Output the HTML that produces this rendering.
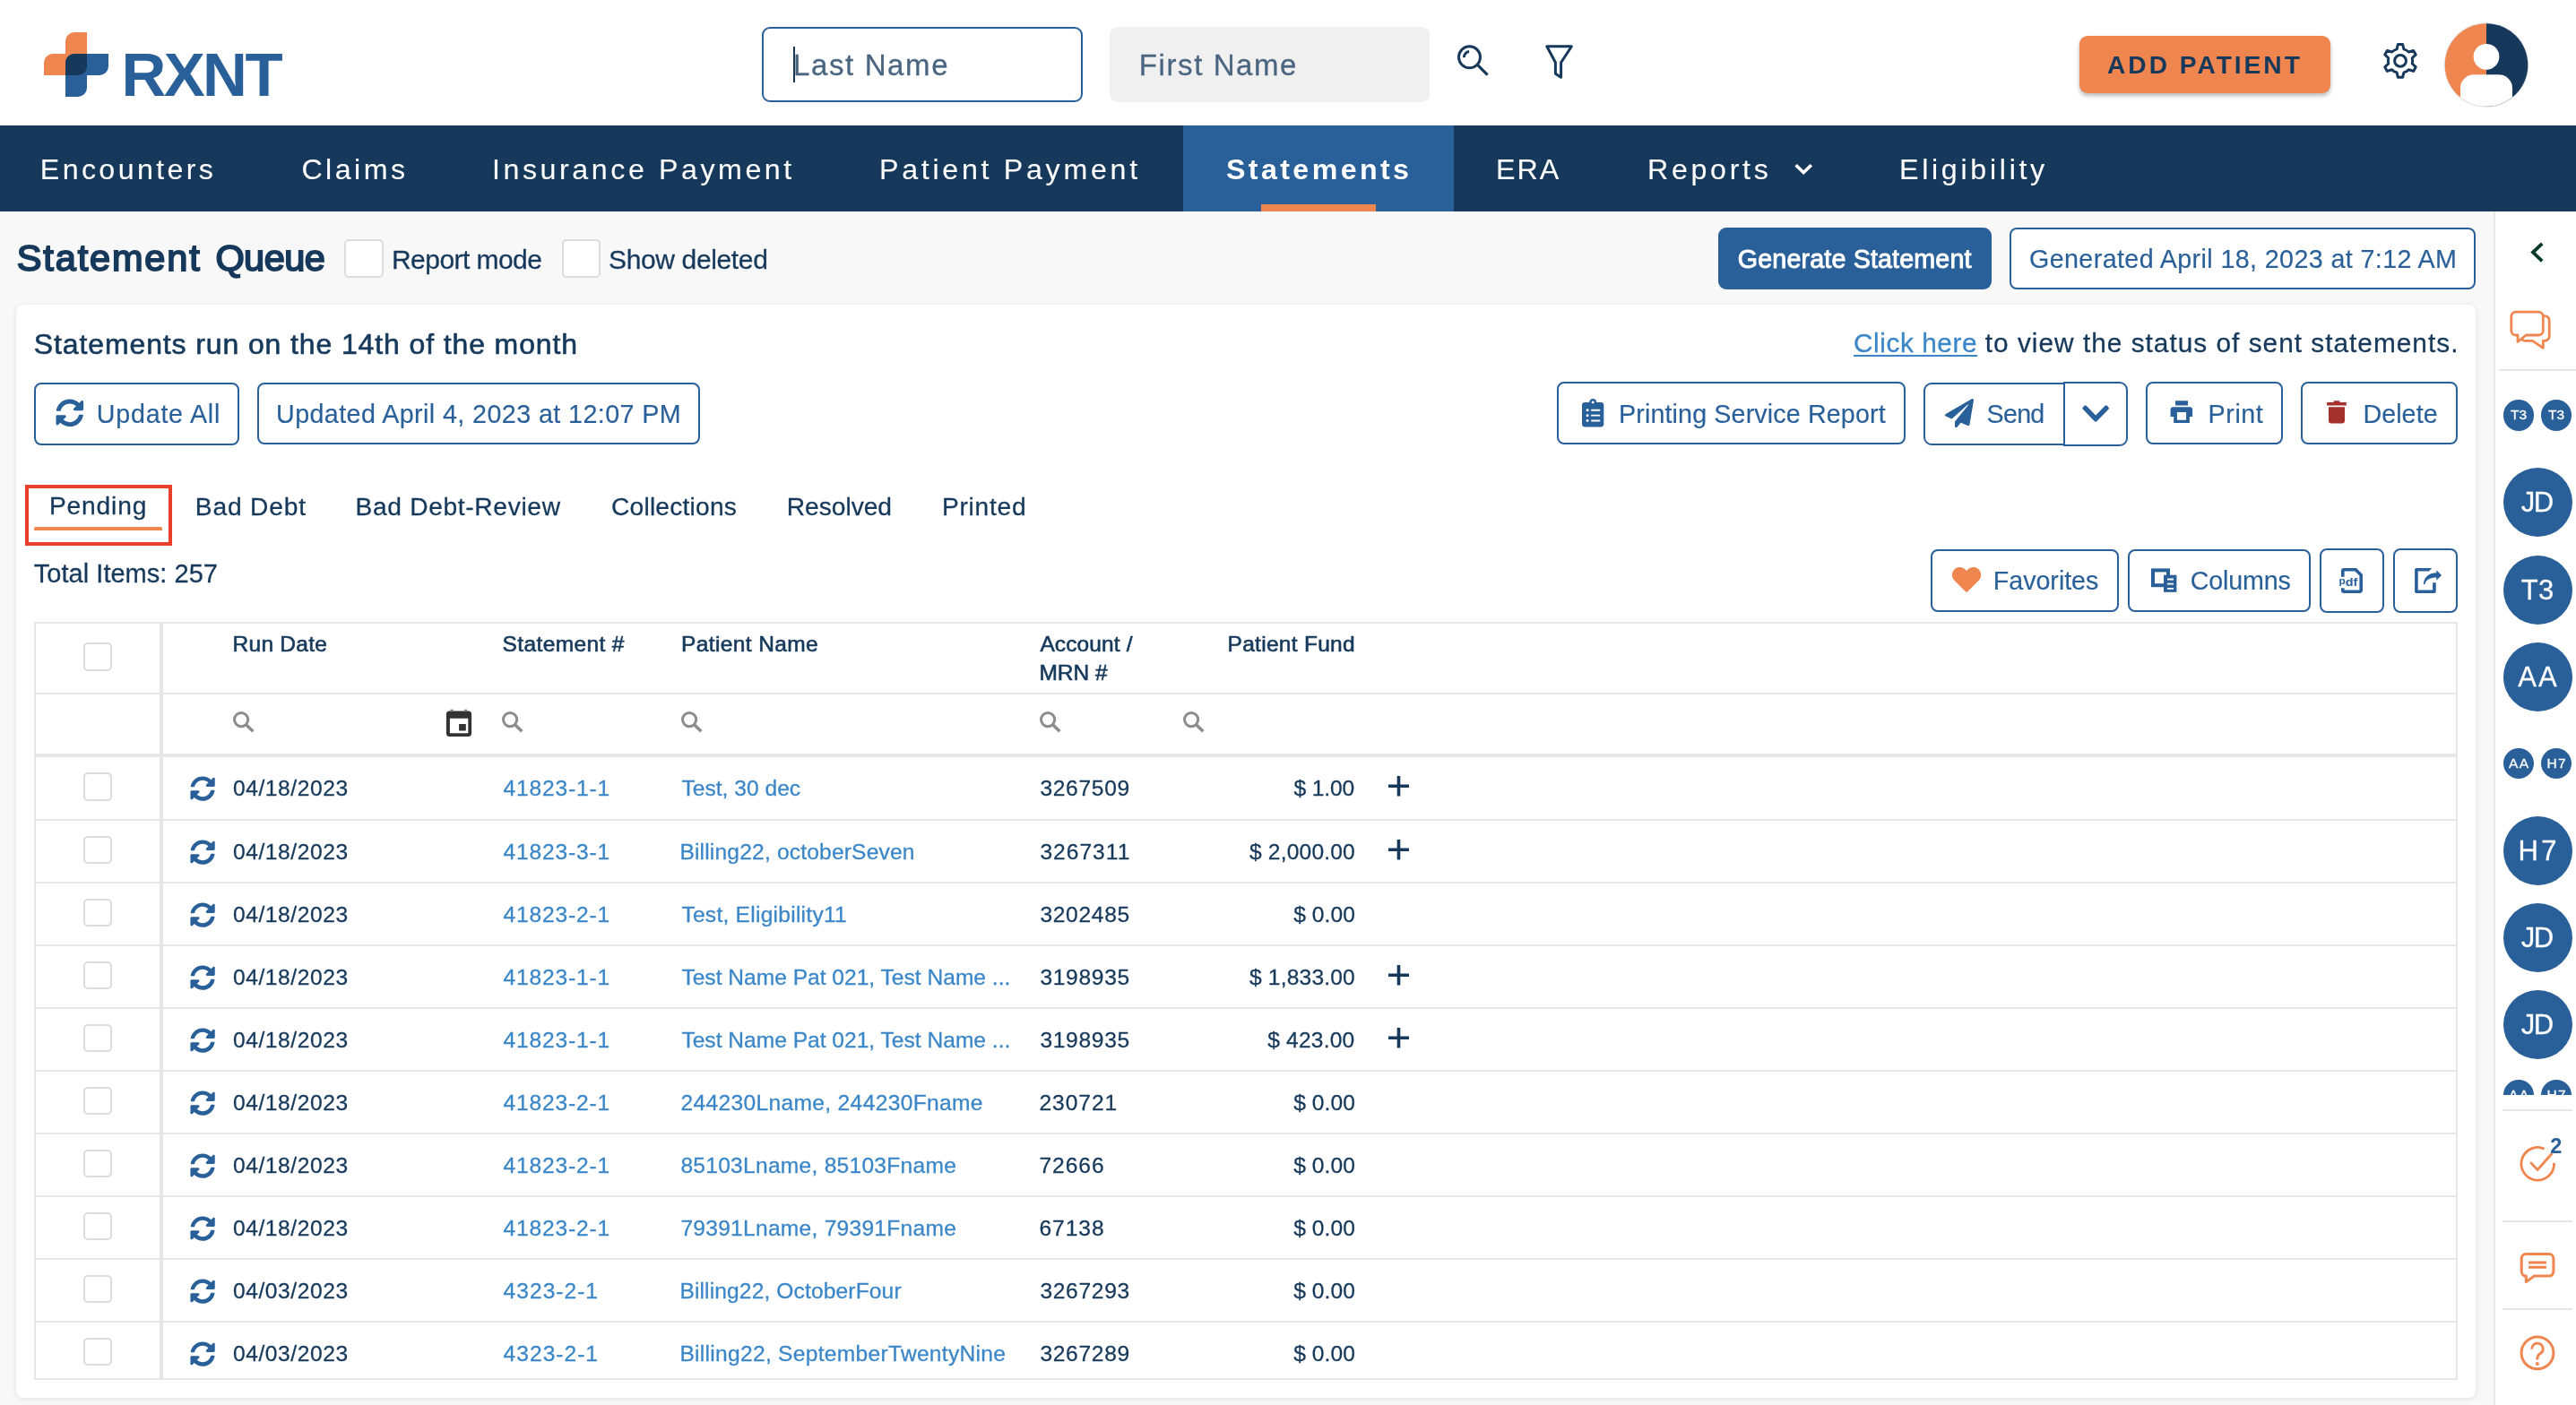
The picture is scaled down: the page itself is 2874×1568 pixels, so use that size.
<!DOCTYPE html><html lang="en"><head><meta charset="utf-8"><title>RXNT - Statement Queue</title><style>
*{box-sizing:border-box;margin:0;padding:0}
html,body{width:2874px;height:1568px;background:#f8f8f8}
body{position:relative;font-family:"Liberation Sans",Arial,sans-serif;color:#16395b;-webkit-text-stroke:.28px currentColor;will-change:transform}
.t{position:absolute;white-space:nowrap;line-height:1;display:block}
.ic{position:absolute;display:block;overflow:visible}
.abs{position:absolute}
header{position:absolute;left:0;top:0;width:2874px;height:140px;background:#fff}
nav{position:absolute;left:0;top:140px;width:2874px;height:96px;background:#16395b;color:#fff}
nav .act{position:absolute;left:1320px;top:0;width:302px;height:96px;background:#2a6099}
nav .act i{position:absolute;left:87px;bottom:0;width:128px;height:8px;background:#ef8650}
.inp{position:absolute;top:30px;height:83.6px;border-radius:9px}
.btn{position:absolute;border:2.4px solid #2a6099;border-radius:8px;background:#fff;color:#2a6099}
.cb{position:absolute;border:2px solid #dcdcdc;border-radius:5px;background:#fff}
.card{position:absolute;left:18px;top:340px;width:2744px;height:1220px;background:#fff;border-radius:8px;box-shadow:0 1px 6px rgba(0,0,0,.10)}
aside{position:absolute;left:2784px;top:236px;width:90px;height:1332px;background:#fff}
.gut{position:absolute;left:2782px;top:236px;width:2.5px;height:1332px;background:#e8e8e8}
.av{position:absolute;border-radius:50%;background:#2a6099;color:#fff;text-align:center}
.av.b{width:77px;height:77px;left:2792.5px;font-size:31px;line-height:77px}
.av.s{width:34.5px;height:34.5px;font-size:15.5px;line-height:34.5px}
.hr{position:absolute;left:2792px;width:78px;height:2px;background:#e6e6e6}
.grid{position:absolute;left:38px;top:694px;width:2704px;height:846px;border:2px solid #e7e7e7;overflow:hidden;background:#fff}
table{border-collapse:separate;border-spacing:0;table-layout:fixed;width:2700px;font-size:24px}
td,th{border-bottom:2px solid #e7e7e7;padding:0;font-weight:normal;text-align:left;position:relative;vertical-align:top}
tr.h th{height:79px}
tr.f td{height:70px;border-bottom-width:4px}
tr.d td{height:70px}
tr.d1 td{height:71px}
td.c0,th.c0{border-right:4px solid #e7e7e7}
a{color:#3a86c8;text-decoration:none}
.m{-webkit-text-stroke:.62px currentColor}
.sb{-webkit-text-stroke:.9px currentColor}
.nv{-webkit-text-stroke:.1px currentColor}
.bt{-webkit-text-stroke:.14px currentColor}
</style></head><body>
<header>
<svg class="ic" style="left:49px;top:36px" width="73" height="73" viewBox="0 0 73 73" ><path fill="#ef8650" d="M24 10A10 10 0 0 1 34 0H48V38A10 10 0 0 1 38 48H0V34A10 10 0 0 1 10 24H24Z"/><path fill="#2a6099" d="M24 34A10 10 0 0 1 34 24H72V38A10 10 0 0 1 62 48H48V62A10 10 0 0 1 38 72H24Z"/><path fill="#16395b" d="M24 34A10 10 0 0 1 34 24H48V38A10 10 0 0 1 38 48H24Z"/></svg>
<span id="rxnt" class="t" style="left:135.4px;top:49.1px;font-size:69px;letter-spacing:-2.56px;color:#2a6099;font-weight:bold;-webkit-text-stroke:0;">RXNT</span>
<div class="inp" style="left:850px;width:358px;border:2.5px solid #2a6099;background:#fff"></div>
<div class="abs" style="left:884.5px;top:52px;width:2px;height:40px;background:#16395b"></div>
<span id="lname" class="t" style="left:885.0px;top:55.6px;font-size:33px;letter-spacing:1.62px;color:#4a6580;">Last Name</span>
<div class="inp" style="left:1238px;width:357px;background:#f0f0f0"></div>
<span id="fname" class="t" style="left:1270.8px;top:55.6px;font-size:33px;letter-spacing:1.59px;color:#4a6580;">First Name</span>
<svg class="ic" style="left:1620px;top:44px" width="50" height="50" viewBox="1620 44 50 50" ><circle cx="1639.5" cy="63.8" r="12" fill="none" stroke="#16395b" stroke-width="3"/><path d="M1648.2 72.2L1659.6 83.6" stroke="#16395b" stroke-width="3.2" fill="none"/><path d="M1633.4 64.2A6.3 6.3 0 0 1 1639.1 57.6" stroke="#16395b" stroke-width="3" fill="none"/></svg>
<svg class="ic" style="left:1715px;top:44px" width="50" height="50" viewBox="1715 44 50 50" ><path d="M1725.8 51.8H1753.4L1741.6 69.8V86.2L1735.4 82.2V69.8Z" stroke="#16395b" stroke-width="3" fill="none" stroke-linejoin="round"/></svg>
<div class="abs" style="left:2320px;top:40px;width:280px;height:64px;border-radius:9px;background:#ef8650;box-shadow:0 3px 5px rgba(0,0,0,.28)"></div>
<span id="addp" class="t" style="left:2351.0px;top:58.1px;font-size:28.2px;letter-spacing:2.96px;color:#16395b;font-weight:bold;-webkit-text-stroke:0;">ADD PATIENT</span>
<svg class="ic" style="left:2654px;top:44px" width="48" height="48" viewBox="2654 44 48 48" ><path d="M2674.08 54.88L2675.38 49.49L2680.62 49.49L2681.92 54.88A13.60 13.60 0 0 1 2687.32 58.00L2692.64 56.42L2695.26 60.96L2691.24 64.78A13.60 13.60 0 0 1 2691.24 71.02L2695.26 74.84L2692.64 79.38L2687.32 77.80A13.60 13.60 0 0 1 2681.92 80.92L2680.62 86.31L2675.38 86.31L2674.08 80.92A13.60 13.60 0 0 1 2668.68 77.80L2663.36 79.38L2660.74 74.84L2664.76 71.02A13.60 13.60 0 0 1 2664.76 64.78L2660.74 60.96L2663.36 56.42L2668.68 58.00A13.60 13.60 0 0 1 2674.08 54.88Z" fill="none" stroke="#16395b" stroke-width="3" stroke-linejoin="round"/><circle cx="2678" cy="67.9" r="6.4" fill="none" stroke="#16395b" stroke-width="3"/></svg>
<svg class="ic" style="left:2726px;top:24px" width="97" height="97" viewBox="2726 24 97 97" ><defs><clipPath id="avc"><circle cx="2774" cy="72.5" r="46.3"/></clipPath></defs><circle cx="2774" cy="72.5" r="47.3" fill="#e4e7ea"/><g clip-path="url(#avc)"><rect x="2726" y="24" width="48" height="97" fill="#ef8650"/><rect x="2774" y="24" width="49" height="97" fill="#16395b"/><circle cx="2774" cy="63.3" r="14.4" fill="#fff"/><rect x="2745" y="83.3" width="58" height="50" rx="15" fill="#fff"/></g></svg>
</header>
<nav><div class="act"><i></i></div>
<span id="n1" class="t nv" style="left:44.8px;top:32.6px;font-size:32.2px;letter-spacing:3.37px;color:#fff;">Encounters</span>
<span id="n2" class="t nv" style="left:336.4px;top:32.6px;font-size:32.2px;letter-spacing:3.46px;color:#fff;">Claims</span>
<span id="n3" class="t nv" style="left:549.0px;top:32.6px;font-size:32.2px;letter-spacing:3.56px;color:#fff;">Insurance Payment</span>
<span id="n4" class="t nv" style="left:981.0px;top:32.6px;font-size:32.2px;letter-spacing:3.71px;color:#fff;">Patient Payment</span>
<span id="n5" class="t nv" style="left:1368.0px;top:32.6px;font-size:32.2px;letter-spacing:3.39px;color:#fff;font-weight:bold;-webkit-text-stroke:0;">Statements</span>
<span id="n6" class="t nv" style="left:1669.0px;top:32.6px;font-size:32.2px;letter-spacing:2.00px;color:#fff;">ERA</span>
<span id="n7" class="t nv" style="left:1838.0px;top:32.6px;font-size:32.2px;letter-spacing:3.67px;color:#fff;">Reports</span>
<span id="n8" class="t nv" style="left:2119.0px;top:32.6px;font-size:32.2px;letter-spacing:3.70px;color:#fff;">Eligibility</span>
<svg class="ic" style="left:2000px;top:40px" width="26" height="16" viewBox="2000 180 26 16" ><path d="M2003.6 184.2L2012.2 192.6L2020.8 184.2" stroke="#fff" stroke-width="3.6" fill="none"/></svg>
</nav>
<main>
<h1 style="font-weight:normal;font-size:41.5px"><span id="h1a" class="t" style="left:18.8px;top:266.6px;font-size:41.5px;letter-spacing:1.85px;-webkit-text-stroke:1.9px currentColor;">Statement</span><span id="h1b" class="t" style="left:240.4px;top:266.6px;font-size:41.5px;letter-spacing:-0.55px;-webkit-text-stroke:1.9px currentColor;">Queue</span></h1>
<div class="cb" style="left:384px;top:266.5px;width:43.5px;height:43.5px"></div>
<span id="rm" class="t" style="left:437.0px;top:274.6px;font-size:30px;letter-spacing:-0.55px;">Report mode</span>
<div class="cb" style="left:626.5px;top:266.5px;width:43.5px;height:43.5px"></div>
<span id="sd" class="t" style="left:679.0px;top:274.6px;font-size:30px;letter-spacing:-0.36px;">Show deleted</span>
<div class="abs" style="left:1917px;top:254px;width:305px;height:69px;border-radius:9px;background:#2a6099"></div>
<span id="gs" class="t sb" style="left:1938.8px;top:274.7px;font-size:28.7px;letter-spacing:0.14px;color:#fff;">Generate Statement</span>
<div class="btn" style="left:2242px;top:254px;width:520px;height:69px"></div>
<span id="gd" class="t bt" style="left:2264.0px;top:274.7px;font-size:28.7px;letter-spacing:0.38px;color:#2a6099;">Generated April 18, 2023 at 7:12 AM</span>
<section class="card"></section>
<span id="srun" class="t m" style="left:37.8px;top:367.9px;font-size:32px;letter-spacing:0.88px;">Statements run on the 14th of the month</span>
<a id="ch" class="t" style="left:2068.0px;top:367.8px;font-size:29.8px;letter-spacing:0.56px;color:#3a86c8;text-decoration:underline;text-decoration-thickness:2px;text-underline-offset:2.5px;">Click here</a>
<span id="tv" class="t" style="left:2214.8px;top:367.8px;font-size:29.8px;letter-spacing:1.01px;">to view the status of sent statements.</span>
<div class="btn" style="left:38px;top:427px;width:229px;height:70px"></div>
<svg class="ic" style="left:62px;top:445px" width="31.6" height="31.6" viewBox="0 0 512 512" ><path fill="#2a6099" d="M370.72 133.28C339.458 104.008 298.888 87.962 255.848 88c-77.458.068-144.328 53.178-162.791 126.85-1.344 5.363-6.122 9.15-11.651 9.15H24.103c-7.498 0-13.194-6.807-11.807-14.176C33.933 94.924 134.813 8 256 8c66.448 0 126.791 26.136 171.315 68.685L463.03 40.97C478.149 25.851 504 36.559 504 57.941V192c0 13.255-10.745 24-24 24H345.941c-21.382 0-32.09-25.851-16.971-40.971l41.75-41.749zM32 296h134.059c21.382 0 32.09 25.851 16.971 40.971l-41.75 41.75c31.262 29.273 71.835 45.319 114.876 45.28 77.418-.07 144.315-53.144 162.787-126.849 1.344-5.363 6.122-9.15 11.651-9.15h57.304c7.498 0 13.194 6.807 11.807 14.176C478.067 417.076 377.187 504 256 504c-66.448 0-126.791-26.136-171.315-68.685L48.97 471.03C33.851 486.149 8 475.441 8 454.059V320c0-13.255 10.745-24 24-24z"/></svg>
<span id="ua" class="t bt" style="left:107.8px;top:448.0px;font-size:28.7px;letter-spacing:0.75px;color:#2a6099;">Update All</span>
<div class="btn" style="left:287px;top:427px;width:494px;height:69px"></div>
<span id="ud" class="t bt" style="left:308.0px;top:447.5px;font-size:28.7px;letter-spacing:0.41px;color:#2a6099;">Updated April 4, 2023 at 12:07 PM</span>
<div class="btn" style="left:1737px;top:426px;width:389px;height:70px"></div>
<svg class="ic" style="left:1764.7px;top:444.5px" width="24.3" height="31.4" viewBox="0 0 384 512" preserveAspectRatio="none"><path fill="#2a6099" d="M336 64h-80c0-35.300-28.700-64-64-64s-64 28.700-64 64H48C21.500 64 0 85.500 0 112v352c0 26.500 21.500 48 48 48h288c26.500 0 48-21.500 48-48V112c0-26.500-21.500-48-48-48zM96 424c-13.300 0-24-10.700-24-24s10.700-24 24-24 24 10.700 24 24-10.700 24-24 24zm0-96c-13.300 0-24-10.700-24-24s10.700-24 24-24 24 10.700 24 24-10.700 24-24 24zm0-96c-13.300 0-24-10.700-24-24s10.700-24 24-24 24 10.700 24 24-10.700 24-24 24zm96-192c13.300 0 24 10.700 24 24s-10.700 24-24 24-24-10.700-24-24 10.700-24 24-24zm128 368c0 4.400-3.600 8-8 8H168c-4.400 0-8-3.600-8-8v-16c0-4.400 3.600-8 8-8h144c4.400 0 8 3.600 8 8v16zm0-96c0 4.400-3.600 8-8 8H168c-4.400 0-8-3.600-8-8v-16c0-4.400 3.600-8 8-8h144c4.400 0 8 3.600 8 8v16zm0-96c0 4.400-3.600 8-8 8H168c-4.400 0-8-3.600-8-8v-16c0-4.400 3.600-8 8-8h144c4.400 0 8 3.600 8 8v16z"/></svg>
<span id="psr" class="t bt" style="left:1806.0px;top:447.5px;font-size:28.7px;letter-spacing:0.12px;color:#2a6099;">Printing Service Report</span>
<div class="btn" style="left:2146px;top:427px;width:159px;height:70px;border-radius:9px 0 0 9px"></div>
<svg class="ic" style="left:2170px;top:445px" width="32" height="32" viewBox="0 0 512 512" ><path fill="#2a6099" d="M476 3.2L12.5 270.6c-18.1 10.4-15.8 35.6 2.2 43.2L121 358.4l287.3-253.2c5.5-4.9 13.3 2.6 8.600 8.300L176 407v80.5c0 23.600 28.500 32.900 42.500 15.800L282 426l124.600 52.200c14.200 6 30.400-2.900 33-18.200l72-432C515 7.800 493.300-6.800 476 3.200z"/></svg>
<span id="send" class="t bt" style="left:2216.6px;top:447.7px;font-size:28.7px;letter-spacing:-0.77px;color:#2a6099;">Send</span>
<div class="btn" style="left:2302px;top:426px;width:72px;height:72px;border-radius:0 9px 9px 0"></div>
<svg class="ic" style="left:2323px;top:451.7px" width="30.3" height="19.2" viewBox="0 118 448 276" preserveAspectRatio="none"><path fill="#2a6099" d="M207.029 381.476L12.686 187.132c-9.373-9.373-9.373-24.569 0-33.941l22.667-22.667c9.357-9.357 24.522-9.375 33.901-.04L224 284.505l154.745-154.021c9.379-9.335 24.544-9.317 33.901.04l22.667 22.667c9.373 9.373 9.373 24.569 0 33.941L240.971 381.476c-9.373 9.372-24.569 9.372-33.942 0z"/></svg>
<div class="btn" style="left:2394px;top:426px;width:153px;height:70px"></div>
<svg class="ic" style="left:2419px;top:445px" width="30" height="30" viewBox="2419 445 30 30" ><path fill="#2a6099" fill-rule="evenodd" d="M2427 447.2H2441V452.4H2427ZM2424.6 454.2H2443.1A3 3 0 0 1 2446.1 457.2V464.9H2442.9V471.9H2425.2V464.9H2421.6V457.2A3 3 0 0 1 2424.6 454.2ZM2428.9 460H2439.1V468.7H2428.9Z"/></svg>
<span id="print" class="t bt" style="left:2463.6px;top:447.5px;font-size:28.7px;letter-spacing:0.55px;color:#2a6099;">Print</span>
<div class="btn" style="left:2567px;top:426px;width:175px;height:70px"></div>
<svg class="ic" style="left:2594px;top:445px" width="26" height="30" viewBox="2594 445 26 30" ><path fill="#a5312d" d="M2603.6 447.2H2610.4V449.1H2617.8V452.4H2596.1V449.1H2603.6ZM2598 454.2H2616V469.4A3 3 0 0 1 2613 472.4H2601A3 3 0 0 1 2598 469.4Z"/></svg>
<span id="del" class="t bt" style="left:2636.4px;top:447.5px;font-size:28.7px;letter-spacing:0.06px;color:#2a6099;">Delete</span>
<div class="abs" style="left:28.3px;top:541.2px;width:163.4px;height:67.8px;border:4.5px solid #e8402a"></div>
<div class="abs" style="left:38.4px;top:588px;width:142.2px;height:4px;background:#ef8650;border-radius:2px 2px 0 0"></div>
<span id="tb1" class="t" style="left:55.0px;top:550.4px;font-size:28.2px;letter-spacing:0.81px;">Pending</span>
<span id="tb2" class="t" style="left:217.8px;top:551.1px;font-size:28.2px;letter-spacing:0.81px;">Bad Debt</span>
<span id="tb3" class="t" style="left:396.6px;top:551.1px;font-size:28.2px;letter-spacing:0.65px;">Bad Debt-Review</span>
<span id="tb4" class="t" style="left:682.0px;top:551.1px;font-size:28.2px;letter-spacing:0.20px;">Collections</span>
<span id="tb5" class="t" style="left:877.8px;top:551.1px;font-size:28.2px;letter-spacing:-0.04px;">Resolved</span>
<span id="tb6" class="t" style="left:1051.0px;top:551.1px;font-size:28.2px;letter-spacing:0.71px;">Printed</span>
<span id="tot" class="t" style="left:37.8px;top:626.4px;font-size:29px;letter-spacing:0.03px;">Total Items: 257</span>
<div class="btn" style="left:2154px;top:613px;width:210px;height:70px"></div>
<svg class="ic" style="left:2178px;top:632.9px" width="32.2" height="27.8" viewBox="0 30 512 452" preserveAspectRatio="none"><path fill="#ef8650" d="M462.3 62.6C407.500 15.900 326 24.300 275.700 76.200L256 96.500l-19.700-20.300C186.100 24.300 104.500 15.900 49.700 62.600c-62.800 53.600-66.100 149.800-9.900 207.900l193.500 199.800c12.500 12.900 32.800 12.900 45.300 0l193.500-199.800c56.300-58.100 53-154.300-9.800-207.900z"/></svg>
<span id="fav" class="t bt" style="left:2223.8px;top:633.7px;font-size:28.7px;letter-spacing:-0.05px;color:#2a6099;">Favorites</span>
<div class="btn" style="left:2374px;top:613px;width:204px;height:70px"></div>
<svg class="ic" style="left:2398px;top:632px" width="34" height="32" viewBox="2398 632 34 32" ><rect x="2402" y="636.4" width="17" height="16.8" fill="none" stroke="#2a6099" stroke-width="4"/><rect x="2414" y="641.7" width="14.4" height="19.1" fill="#2a6099"/><path d="M2418 646.5H2425M2418 651.7H2425M2418 656.8H2425" stroke="#fff" stroke-width="1.8"/></svg>
<span id="cols" class="t bt" style="left:2443.8px;top:633.7px;font-size:28.7px;letter-spacing:-0.20px;color:#2a6099;">Columns</span>
<div class="btn" style="left:2588px;top:612px;width:72px;height:72px"></div>
<svg class="ic" style="left:2606px;top:630px" width="36" height="36" viewBox="2606 630 36 36" ><path d="M2613.800 643.700V637.300A1.500 1.500 0 0 1 2615.300 635.800H2628.200L2634.200 641.800V658.700A1.500 1.500 0 0 1 2632.700 660.200H2615.300A1.500 1.500 0 0 1 2613.800 658.700V656.200" fill="none" stroke="#2a6099" stroke-width="3.600"/><text x="2609.500" y="653.800" style="-webkit-text-stroke:0" font-family="Liberation Sans,Arial,sans-serif" font-weight="bold" font-size="13.400" fill="#2a6099" textLength="20.800" lengthAdjust="spacingAndGlyphs"><tspan font-size="11" dy="-2.300">p</tspan><tspan dy="2.300">df</tspan></text></svg>
<div class="btn" style="left:2670px;top:612px;width:72px;height:72px"></div>
<svg class="ic" style="left:2690px;top:630px" width="40" height="36" viewBox="2690 630 40 36" ><path d="M2710 635.800H2695.900V660.200H2715.900V650.300" fill="none" stroke="#2a6099" stroke-width="3.600" stroke-linejoin="round"/><path fill="#2a6099" d="M2709.500 634H2713.300L2709.800 637.600H2709.500Z"/><path fill="#2a6099" d="M2703.900 652.200C2704.300 643.400 2710.500 639.300 2718.300 639.300V636.200L2724 641.900L2718.300 647.700V644.400C2711.500 644.400 2706.800 646.200 2705.300 652.200Z"/></svg>
<div class="grid"><table><colgroup><col style="width:142px"><col style="width:360px"><col style="width:200px"><col style="width:400px"><col style="width:160px"><col style="width:231px"><col style="width:1207px"></colgroup>
<thead><tr class="h">
<th class="c0"><div class="cb" style="left:53.2px;top:21.3px;width:31.6px;height:31.6px"></div></th>
<th><span id="th1" class="t m" style="left:77.6px;top:10.8px;font-size:24.5px;letter-spacing:0.25px;">Run Date</span></th>
<th><span id="th2" class="t m" style="left:18.6px;top:10.8px;font-size:24.5px;letter-spacing:0.38px;">Statement #</span></th>
<th><span id="th3" class="t m" style="left:18.0px;top:10.8px;font-size:24.5px;letter-spacing:0.39px;">Patient Name</span></th>
<th><span id="th4a" class="t m" style="left:18.4px;top:10.8px;font-size:24.5px;letter-spacing:0.12px;">Account /</span><span id="th4b" class="t m" style="left:17.4px;top:42.9px;font-size:24.5px;letter-spacing:0.03px;">MRN #</span></th>
<th><span id="th5" class="t m" style="left:67.6px;top:10.8px;font-size:24.5px;letter-spacing:0.28px;">Patient Fund</span></th>
<th></th></tr>
<tr class="f"><td class="c0"></td>
<td><svg class="ic" style="left:77.60000000000002px;top:19.200000000000045px" width="26" height="26" viewBox="0 0 26 26" ><circle cx="9.1" cy="9.1" r="7.6" fill="none" stroke="#8c8c8c" stroke-width="3"/><path d="M14.7 14.9L22.4 22.3" stroke="#8c8c8c" stroke-width="3.4" fill="none"/></svg><svg class="ic" style="left:315px;top:15px" width="31" height="33" viewBox="497 790 31 33" ><path fill="#333" fill-rule="evenodd" d="M501.500 793.500H522.500A3.600 3.600 0 0 1 526.100 797.100V818.300A3.600 3.600 0 0 1 522.500 821.900H501.500A3.600 3.600 0 0 1 497.900 818.300V797.100A3.600 3.600 0 0 1 501.500 793.500ZM501.900 801.700H522.300V818.200H501.900ZM512.100 807.900H519.800V815.400H512.100Z"/><path d="M502.500 792.300H505.700M517.900 792.300H521.100" stroke="#555" stroke-width="1"/></svg></td>
<td><svg class="ic" style="left:17.600000000000023px;top:19.200000000000045px" width="26" height="26" viewBox="0 0 26 26" ><circle cx="9.1" cy="9.1" r="7.6" fill="none" stroke="#8c8c8c" stroke-width="3"/><path d="M14.7 14.9L22.4 22.3" stroke="#8c8c8c" stroke-width="3.4" fill="none"/></svg></td>
<td><svg class="ic" style="left:17.600000000000023px;top:19.200000000000045px" width="26" height="26" viewBox="0 0 26 26" ><circle cx="9.1" cy="9.1" r="7.6" fill="none" stroke="#8c8c8c" stroke-width="3"/><path d="M14.7 14.9L22.4 22.3" stroke="#8c8c8c" stroke-width="3.4" fill="none"/></svg></td>
<td><svg class="ic" style="left:17.59999999999991px;top:19.200000000000045px" width="26" height="26" viewBox="0 0 26 26" ><circle cx="9.1" cy="9.1" r="7.6" fill="none" stroke="#8c8c8c" stroke-width="3"/><path d="M14.7 14.9L22.4 22.3" stroke="#8c8c8c" stroke-width="3.4" fill="none"/></svg></td>
<td><svg class="ic" style="left:17.59999999999991px;top:19.200000000000045px" width="26" height="26" viewBox="0 0 26 26" ><circle cx="9.1" cy="9.1" r="7.6" fill="none" stroke="#8c8c8c" stroke-width="3"/><path d="M14.7 14.9L22.4 22.3" stroke="#8c8c8c" stroke-width="3.4" fill="none"/></svg></td>
<td></td></tr></thead><tbody>
<tr class="d d1">
<td class="c0"><div class="cb" style="left:53.2px;top:17.200000000000045px;width:31.6px;height:31.6px"></div></td>
<td><svg class="ic" style="left:29.80000000000001px;top:20.5px" width="28.2" height="28.2" viewBox="0 0 512 512" ><path fill="#2a6099" d="M370.72 133.28C339.458 104.008 298.888 87.962 255.848 88c-77.458.068-144.328 53.178-162.791 126.85-1.344 5.363-6.122 9.15-11.651 9.15H24.103c-7.498 0-13.194-6.807-11.807-14.176C33.933 94.924 134.813 8 256 8c66.448 0 126.791 26.136 171.315 68.685L463.03 40.97C478.149 25.851 504 36.559 504 57.941V192c0 13.255-10.745 24-24 24H345.941c-21.382 0-32.09-25.851-16.971-40.971l41.75-41.749zM32 296h134.059c21.382 0 32.09 25.851 16.971 40.971l-41.75 41.75c31.262 29.273 71.835 45.319 114.876 45.28 77.418-.07 144.315-53.144 162.787-126.849 1.344-5.363 6.122-9.15 11.651-9.15h57.304c7.498 0 13.194 6.807 11.807 14.176C478.067 417.076 377.187 504 256 504c-66.448 0-126.791-26.136-171.315-68.685L48.97 471.03C33.851 486.149 8 475.441 8 454.059V320c0-13.255 10.745-24 24-24z"/></svg><span id="r0a" class="t" style="left:78.0px;top:23.2px;font-size:24.6px;letter-spacing:0.56px;">04/18/2023</span></td>
<td><a id="r0b" class="t" style="left:19.6px;top:23.2px;font-size:24.6px;letter-spacing:0.81px;color:#3a86c8;">41823-1-1</a></td>
<td><a id="r0c" class="t" style="left:18.4px;top:23.2px;font-size:24.6px;letter-spacing:0.01px;color:#3a86c8;">Test, 30 dec</a></td>
<td><span id="r0d" class="t" style="left:18.4px;top:23.2px;font-size:24.6px;letter-spacing:0.67px;">3267509</span></td>
<td><span id="r0e" class="t" style="left:141.6px;top:23.2px;font-size:24.6px;letter-spacing:-0.16px;">$ 1.00</span></td>
<td><svg class="ic" style="left:16px;top:21.299999999999955px" width="23" height="23" viewBox="0 0 23 23" ><path d="M11.500 0V22.400M0 11.200H23" stroke="#16395b" stroke-width="3.600" fill="none"/></svg></td></tr>
<tr class="d">
<td class="c0"><div class="cb" style="left:53.2px;top:16.700000000000045px;width:31.6px;height:31.6px"></div></td>
<td><svg class="ic" style="left:29.80000000000001px;top:20.5px" width="28.2" height="28.2" viewBox="0 0 512 512" ><path fill="#2a6099" d="M370.72 133.28C339.458 104.008 298.888 87.962 255.848 88c-77.458.068-144.328 53.178-162.791 126.85-1.344 5.363-6.122 9.15-11.651 9.15H24.103c-7.498 0-13.194-6.807-11.807-14.176C33.933 94.924 134.813 8 256 8c66.448 0 126.791 26.136 171.315 68.685L463.03 40.97C478.149 25.851 504 36.559 504 57.941V192c0 13.255-10.745 24-24 24H345.941c-21.382 0-32.09-25.851-16.971-40.971l41.75-41.749zM32 296h134.059c21.382 0 32.09 25.851 16.971 40.971l-41.75 41.75c31.262 29.273 71.835 45.319 114.876 45.28 77.418-.07 144.315-53.144 162.787-126.849 1.344-5.363 6.122-9.15 11.651-9.15h57.304c7.498 0 13.194 6.807 11.807 14.176C478.067 417.076 377.187 504 256 504c-66.448 0-126.791-26.136-171.315-68.685L48.97 471.03C33.851 486.149 8 475.441 8 454.059V320c0-13.255 10.745-24 24-24z"/></svg><span id="r1a" class="t" style="left:78.0px;top:23.2px;font-size:24.6px;letter-spacing:0.56px;">04/18/2023</span></td>
<td><a id="r1b" class="t" style="left:19.6px;top:23.2px;font-size:24.6px;letter-spacing:0.81px;color:#3a86c8;">41823-3-1</a></td>
<td><a id="r1c" class="t" style="left:16.4px;top:23.2px;font-size:24.6px;letter-spacing:0.17px;color:#3a86c8;">Billing22, octoberSeven</a></td>
<td><span id="r1d" class="t" style="left:18.4px;top:23.2px;font-size:24.6px;letter-spacing:1.00px;">3267311</span></td>
<td><span id="r1e" class="t" style="left:92.0px;top:23.2px;font-size:24.6px;letter-spacing:0.17px;">$ 2,000.00</span></td>
<td><svg class="ic" style="left:16px;top:21.299999999999955px" width="23" height="23" viewBox="0 0 23 23" ><path d="M11.500 0V22.400M0 11.200H23" stroke="#16395b" stroke-width="3.600" fill="none"/></svg></td></tr>
<tr class="d">
<td class="c0"><div class="cb" style="left:53.2px;top:16.700000000000045px;width:31.6px;height:31.6px"></div></td>
<td><svg class="ic" style="left:29.80000000000001px;top:20.5px" width="28.2" height="28.2" viewBox="0 0 512 512" ><path fill="#2a6099" d="M370.72 133.28C339.458 104.008 298.888 87.962 255.848 88c-77.458.068-144.328 53.178-162.791 126.85-1.344 5.363-6.122 9.15-11.651 9.15H24.103c-7.498 0-13.194-6.807-11.807-14.176C33.933 94.924 134.813 8 256 8c66.448 0 126.791 26.136 171.315 68.685L463.03 40.97C478.149 25.851 504 36.559 504 57.941V192c0 13.255-10.745 24-24 24H345.941c-21.382 0-32.09-25.851-16.971-40.971l41.75-41.749zM32 296h134.059c21.382 0 32.09 25.851 16.971 40.971l-41.75 41.75c31.262 29.273 71.835 45.319 114.876 45.28 77.418-.07 144.315-53.144 162.787-126.849 1.344-5.363 6.122-9.15 11.651-9.15h57.304c7.498 0 13.194 6.807 11.807 14.176C478.067 417.076 377.187 504 256 504c-66.448 0-126.791-26.136-171.315-68.685L48.97 471.03C33.851 486.149 8 475.441 8 454.059V320c0-13.255 10.745-24 24-24z"/></svg><span id="r2a" class="t" style="left:78.0px;top:23.2px;font-size:24.6px;letter-spacing:0.56px;">04/18/2023</span></td>
<td><a id="r2b" class="t" style="left:19.6px;top:23.2px;font-size:24.6px;letter-spacing:0.81px;color:#3a86c8;">41823-2-1</a></td>
<td><a id="r2c" class="t" style="left:18.4px;top:23.2px;font-size:24.6px;letter-spacing:0.24px;color:#3a86c8;">Test, Eligibility11</a></td>
<td><span id="r2d" class="t" style="left:18.4px;top:23.2px;font-size:24.6px;letter-spacing:0.67px;">3202485</span></td>
<td><span id="r2e" class="t" style="left:141.2px;top:23.2px;font-size:24.6px;letter-spacing:0.08px;">$ 0.00</span></td>
<td></td></tr>
<tr class="d">
<td class="c0"><div class="cb" style="left:53.2px;top:16.700000000000045px;width:31.6px;height:31.6px"></div></td>
<td><svg class="ic" style="left:29.80000000000001px;top:20.5px" width="28.2" height="28.2" viewBox="0 0 512 512" ><path fill="#2a6099" d="M370.72 133.28C339.458 104.008 298.888 87.962 255.848 88c-77.458.068-144.328 53.178-162.791 126.85-1.344 5.363-6.122 9.15-11.651 9.15H24.103c-7.498 0-13.194-6.807-11.807-14.176C33.933 94.924 134.813 8 256 8c66.448 0 126.791 26.136 171.315 68.685L463.03 40.97C478.149 25.851 504 36.559 504 57.941V192c0 13.255-10.745 24-24 24H345.941c-21.382 0-32.09-25.851-16.971-40.971l41.75-41.749zM32 296h134.059c21.382 0 32.09 25.851 16.971 40.971l-41.75 41.75c31.262 29.273 71.835 45.319 114.876 45.28 77.418-.07 144.315-53.144 162.787-126.849 1.344-5.363 6.122-9.15 11.651-9.15h57.304c7.498 0 13.194 6.807 11.807 14.176C478.067 417.076 377.187 504 256 504c-66.448 0-126.791-26.136-171.315-68.685L48.97 471.03C33.851 486.149 8 475.441 8 454.059V320c0-13.255 10.745-24 24-24z"/></svg><span id="r3a" class="t" style="left:78.0px;top:23.2px;font-size:24.6px;letter-spacing:0.56px;">04/18/2023</span></td>
<td><a id="r3b" class="t" style="left:19.6px;top:23.2px;font-size:24.6px;letter-spacing:0.81px;color:#3a86c8;">41823-1-1</a></td>
<td><a id="r3c" class="t" style="left:18.4px;top:23.2px;font-size:24.6px;letter-spacing:-0.01px;color:#3a86c8;">Test Name Pat 021, Test Name ...</a></td>
<td><span id="r3d" class="t" style="left:18.4px;top:23.2px;font-size:24.6px;letter-spacing:0.67px;">3198935</span></td>
<td><span id="r3e" class="t" style="left:92.0px;top:23.2px;font-size:24.6px;letter-spacing:0.17px;">$ 1,833.00</span></td>
<td><svg class="ic" style="left:16px;top:21.299999999999955px" width="23" height="23" viewBox="0 0 23 23" ><path d="M11.500 0V22.400M0 11.200H23" stroke="#16395b" stroke-width="3.600" fill="none"/></svg></td></tr>
<tr class="d">
<td class="c0"><div class="cb" style="left:53.2px;top:16.700000000000045px;width:31.6px;height:31.6px"></div></td>
<td><svg class="ic" style="left:29.80000000000001px;top:20.5px" width="28.2" height="28.2" viewBox="0 0 512 512" ><path fill="#2a6099" d="M370.72 133.28C339.458 104.008 298.888 87.962 255.848 88c-77.458.068-144.328 53.178-162.791 126.85-1.344 5.363-6.122 9.15-11.651 9.15H24.103c-7.498 0-13.194-6.807-11.807-14.176C33.933 94.924 134.813 8 256 8c66.448 0 126.791 26.136 171.315 68.685L463.03 40.97C478.149 25.851 504 36.559 504 57.941V192c0 13.255-10.745 24-24 24H345.941c-21.382 0-32.09-25.851-16.971-40.971l41.75-41.749zM32 296h134.059c21.382 0 32.09 25.851 16.971 40.971l-41.75 41.75c31.262 29.273 71.835 45.319 114.876 45.28 77.418-.07 144.315-53.144 162.787-126.849 1.344-5.363 6.122-9.15 11.651-9.15h57.304c7.498 0 13.194 6.807 11.807 14.176C478.067 417.076 377.187 504 256 504c-66.448 0-126.791-26.136-171.315-68.685L48.97 471.03C33.851 486.149 8 475.441 8 454.059V320c0-13.255 10.745-24 24-24z"/></svg><span id="r4a" class="t" style="left:78.0px;top:23.2px;font-size:24.6px;letter-spacing:0.56px;">04/18/2023</span></td>
<td><a id="r4b" class="t" style="left:19.6px;top:23.2px;font-size:24.6px;letter-spacing:0.81px;color:#3a86c8;">41823-1-1</a></td>
<td><a id="r4c" class="t" style="left:18.4px;top:23.2px;font-size:24.6px;letter-spacing:-0.01px;color:#3a86c8;">Test Name Pat 021, Test Name ...</a></td>
<td><span id="r4d" class="t" style="left:18.4px;top:23.2px;font-size:24.6px;letter-spacing:0.67px;">3198935</span></td>
<td><span id="r4e" class="t" style="left:112.2px;top:23.2px;font-size:24.6px;letter-spacing:0.19px;">$ 423.00</span></td>
<td><svg class="ic" style="left:16px;top:21.299999999999955px" width="23" height="23" viewBox="0 0 23 23" ><path d="M11.500 0V22.400M0 11.200H23" stroke="#16395b" stroke-width="3.600" fill="none"/></svg></td></tr>
<tr class="d">
<td class="c0"><div class="cb" style="left:53.2px;top:16.700000000000045px;width:31.6px;height:31.6px"></div></td>
<td><svg class="ic" style="left:29.80000000000001px;top:20.5px" width="28.2" height="28.2" viewBox="0 0 512 512" ><path fill="#2a6099" d="M370.72 133.28C339.458 104.008 298.888 87.962 255.848 88c-77.458.068-144.328 53.178-162.791 126.85-1.344 5.363-6.122 9.15-11.651 9.15H24.103c-7.498 0-13.194-6.807-11.807-14.176C33.933 94.924 134.813 8 256 8c66.448 0 126.791 26.136 171.315 68.685L463.03 40.97C478.149 25.851 504 36.559 504 57.941V192c0 13.255-10.745 24-24 24H345.941c-21.382 0-32.09-25.851-16.971-40.971l41.75-41.749zM32 296h134.059c21.382 0 32.09 25.851 16.971 40.971l-41.75 41.75c31.262 29.273 71.835 45.319 114.876 45.28 77.418-.07 144.315-53.144 162.787-126.849 1.344-5.363 6.122-9.15 11.651-9.15h57.304c7.498 0 13.194 6.807 11.807 14.176C478.067 417.076 377.187 504 256 504c-66.448 0-126.791-26.136-171.315-68.685L48.97 471.03C33.851 486.149 8 475.441 8 454.059V320c0-13.255 10.745-24 24-24z"/></svg><span id="r5a" class="t" style="left:78.0px;top:23.2px;font-size:24.6px;letter-spacing:0.56px;">04/18/2023</span></td>
<td><a id="r5b" class="t" style="left:19.6px;top:23.2px;font-size:24.6px;letter-spacing:0.81px;color:#3a86c8;">41823-2-1</a></td>
<td><a id="r5c" class="t" style="left:17.4px;top:23.2px;font-size:24.6px;letter-spacing:0.33px;color:#3a86c8;">244230Lname, 244230Fname</a></td>
<td><span id="r5d" class="t" style="left:17.4px;top:23.2px;font-size:24.6px;letter-spacing:0.96px;">230721</span></td>
<td><span id="r5e" class="t" style="left:141.2px;top:23.2px;font-size:24.6px;letter-spacing:0.08px;">$ 0.00</span></td>
<td></td></tr>
<tr class="d">
<td class="c0"><div class="cb" style="left:53.2px;top:16.700000000000045px;width:31.6px;height:31.6px"></div></td>
<td><svg class="ic" style="left:29.80000000000001px;top:20.5px" width="28.2" height="28.2" viewBox="0 0 512 512" ><path fill="#2a6099" d="M370.72 133.28C339.458 104.008 298.888 87.962 255.848 88c-77.458.068-144.328 53.178-162.791 126.85-1.344 5.363-6.122 9.15-11.651 9.15H24.103c-7.498 0-13.194-6.807-11.807-14.176C33.933 94.924 134.813 8 256 8c66.448 0 126.791 26.136 171.315 68.685L463.03 40.97C478.149 25.851 504 36.559 504 57.941V192c0 13.255-10.745 24-24 24H345.941c-21.382 0-32.09-25.851-16.971-40.971l41.75-41.749zM32 296h134.059c21.382 0 32.09 25.851 16.971 40.971l-41.75 41.75c31.262 29.273 71.835 45.319 114.876 45.28 77.418-.07 144.315-53.144 162.787-126.849 1.344-5.363 6.122-9.15 11.651-9.15h57.304c7.498 0 13.194 6.807 11.807 14.176C478.067 417.076 377.187 504 256 504c-66.448 0-126.791-26.136-171.315-68.685L48.97 471.03C33.851 486.149 8 475.441 8 454.059V320c0-13.255 10.745-24 24-24z"/></svg><span id="r6a" class="t" style="left:78.0px;top:23.2px;font-size:24.6px;letter-spacing:0.56px;">04/18/2023</span></td>
<td><a id="r6b" class="t" style="left:19.6px;top:23.2px;font-size:24.6px;letter-spacing:0.81px;color:#3a86c8;">41823-2-1</a></td>
<td><a id="r6c" class="t" style="left:17.4px;top:23.2px;font-size:24.6px;letter-spacing:0.25px;color:#3a86c8;">85103Lname, 85103Fname</a></td>
<td><span id="r6d" class="t" style="left:17.4px;top:23.2px;font-size:24.6px;letter-spacing:0.97px;">72666</span></td>
<td><span id="r6e" class="t" style="left:141.2px;top:23.2px;font-size:24.6px;letter-spacing:0.08px;">$ 0.00</span></td>
<td></td></tr>
<tr class="d">
<td class="c0"><div class="cb" style="left:53.2px;top:16.700000000000045px;width:31.6px;height:31.6px"></div></td>
<td><svg class="ic" style="left:29.80000000000001px;top:20.5px" width="28.2" height="28.2" viewBox="0 0 512 512" ><path fill="#2a6099" d="M370.72 133.28C339.458 104.008 298.888 87.962 255.848 88c-77.458.068-144.328 53.178-162.791 126.85-1.344 5.363-6.122 9.15-11.651 9.15H24.103c-7.498 0-13.194-6.807-11.807-14.176C33.933 94.924 134.813 8 256 8c66.448 0 126.791 26.136 171.315 68.685L463.03 40.97C478.149 25.851 504 36.559 504 57.941V192c0 13.255-10.745 24-24 24H345.941c-21.382 0-32.09-25.851-16.971-40.971l41.75-41.749zM32 296h134.059c21.382 0 32.09 25.851 16.971 40.971l-41.75 41.75c31.262 29.273 71.835 45.319 114.876 45.28 77.418-.07 144.315-53.144 162.787-126.849 1.344-5.363 6.122-9.15 11.651-9.15h57.304c7.498 0 13.194 6.807 11.807 14.176C478.067 417.076 377.187 504 256 504c-66.448 0-126.791-26.136-171.315-68.685L48.97 471.03C33.851 486.149 8 475.441 8 454.059V320c0-13.255 10.745-24 24-24z"/></svg><span id="r7a" class="t" style="left:78.0px;top:23.2px;font-size:24.6px;letter-spacing:0.56px;">04/18/2023</span></td>
<td><a id="r7b" class="t" style="left:19.6px;top:23.2px;font-size:24.6px;letter-spacing:0.81px;color:#3a86c8;">41823-2-1</a></td>
<td><a id="r7c" class="t" style="left:17.4px;top:23.2px;font-size:24.6px;letter-spacing:0.25px;color:#3a86c8;">79391Lname, 79391Fname</a></td>
<td><span id="r7d" class="t" style="left:17.4px;top:23.2px;font-size:24.6px;letter-spacing:0.97px;">67138</span></td>
<td><span id="r7e" class="t" style="left:141.2px;top:23.2px;font-size:24.6px;letter-spacing:0.08px;">$ 0.00</span></td>
<td></td></tr>
<tr class="d">
<td class="c0"><div class="cb" style="left:53.2px;top:16.700000000000045px;width:31.6px;height:31.6px"></div></td>
<td><svg class="ic" style="left:29.80000000000001px;top:20.5px" width="28.2" height="28.2" viewBox="0 0 512 512" ><path fill="#2a6099" d="M370.72 133.28C339.458 104.008 298.888 87.962 255.848 88c-77.458.068-144.328 53.178-162.791 126.85-1.344 5.363-6.122 9.15-11.651 9.15H24.103c-7.498 0-13.194-6.807-11.807-14.176C33.933 94.924 134.813 8 256 8c66.448 0 126.791 26.136 171.315 68.685L463.03 40.97C478.149 25.851 504 36.559 504 57.941V192c0 13.255-10.745 24-24 24H345.941c-21.382 0-32.09-25.851-16.971-40.971l41.75-41.749zM32 296h134.059c21.382 0 32.09 25.851 16.971 40.971l-41.75 41.75c31.262 29.273 71.835 45.319 114.876 45.28 77.418-.07 144.315-53.144 162.787-126.849 1.344-5.363 6.122-9.15 11.651-9.15h57.304c7.498 0 13.194 6.807 11.807 14.176C478.067 417.076 377.187 504 256 504c-66.448 0-126.791-26.136-171.315-68.685L48.97 471.03C33.851 486.149 8 475.441 8 454.059V320c0-13.255 10.745-24 24-24z"/></svg><span id="r8a" class="t" style="left:78.0px;top:23.2px;font-size:24.6px;letter-spacing:0.56px;">04/03/2023</span></td>
<td><a id="r8b" class="t" style="left:19.6px;top:23.2px;font-size:24.6px;letter-spacing:1.00px;color:#3a86c8;">4323-2-1</a></td>
<td><a id="r8c" class="t" style="left:16.4px;top:23.2px;font-size:24.6px;letter-spacing:0.12px;color:#3a86c8;">Billing22, OctoberFour</a></td>
<td><span id="r8d" class="t" style="left:18.4px;top:23.2px;font-size:24.6px;letter-spacing:0.67px;">3267293</span></td>
<td><span id="r8e" class="t" style="left:141.2px;top:23.2px;font-size:24.6px;letter-spacing:0.08px;">$ 0.00</span></td>
<td></td></tr>
<tr class="d">
<td class="c0"><div class="cb" style="left:53.2px;top:16.700000000000045px;width:31.6px;height:31.6px"></div></td>
<td><svg class="ic" style="left:29.80000000000001px;top:20.5px" width="28.2" height="28.2" viewBox="0 0 512 512" ><path fill="#2a6099" d="M370.72 133.28C339.458 104.008 298.888 87.962 255.848 88c-77.458.068-144.328 53.178-162.791 126.85-1.344 5.363-6.122 9.15-11.651 9.15H24.103c-7.498 0-13.194-6.807-11.807-14.176C33.933 94.924 134.813 8 256 8c66.448 0 126.791 26.136 171.315 68.685L463.03 40.97C478.149 25.851 504 36.559 504 57.941V192c0 13.255-10.745 24-24 24H345.941c-21.382 0-32.09-25.851-16.971-40.971l41.75-41.749zM32 296h134.059c21.382 0 32.09 25.851 16.971 40.971l-41.75 41.75c31.262 29.273 71.835 45.319 114.876 45.28 77.418-.07 144.315-53.144 162.787-126.849 1.344-5.363 6.122-9.15 11.651-9.15h57.304c7.498 0 13.194 6.807 11.807 14.176C478.067 417.076 377.187 504 256 504c-66.448 0-126.791-26.136-171.315-68.685L48.97 471.03C33.851 486.149 8 475.441 8 454.059V320c0-13.255 10.745-24 24-24z"/></svg><span id="r9a" class="t" style="left:78.0px;top:23.2px;font-size:24.6px;letter-spacing:0.56px;">04/03/2023</span></td>
<td><a id="r9b" class="t" style="left:19.6px;top:23.2px;font-size:24.6px;letter-spacing:1.00px;color:#3a86c8;">4323-2-1</a></td>
<td><a id="r9c" class="t" style="left:16.4px;top:23.2px;font-size:24.6px;letter-spacing:0.28px;color:#3a86c8;">Billing22, SeptemberTwentyNine</a></td>
<td><span id="r9d" class="t" style="left:18.4px;top:23.2px;font-size:24.6px;letter-spacing:0.67px;">3267289</span></td>
<td><span id="r9e" class="t" style="left:141.2px;top:23.2px;font-size:24.6px;letter-spacing:0.08px;">$ 0.00</span></td>
<td></td></tr>
</tbody></table></div>
</main>
<div class="gut"></div><aside>
<svg class="ic" style="left:36px;top:30px" width="22" height="32" viewBox="2820 266 22 32" ><path d="M2836.200 271.800L2826 281.500L2836.200 291.300" stroke="#063b2b" stroke-width="3.800" fill="none"/></svg>
<svg class="ic" style="left:12px;top:106px" width="54" height="52" viewBox="2796 342 54 52" ><g fill="none" stroke="#ef8650" stroke-width="2.800" stroke-linejoin="round"><path d="M2806.800 348.200H2832.300A5 5 0 0 1 2837.300 353.200V369A5 5 0 0 1 2832.300 374H2818.300L2809 381.300V374H2806.800A5 5 0 0 1 2801.800 369V353.200A5 5 0 0 1 2806.800 348.200Z"/><path d="M2838.300 352.600H2839.200A5 5 0 0 1 2844.200 357.600V375.300A5 5 0 0 1 2839.200 380.300H2837.300V388.300L2825.500 380.300H2816.500L2812.500 378.800"/></g></svg>
<div class="hr" style="left:4px;width:86px;top:176px"></div>
<div class="av s" style="left:8.8px;top:210.1px;letter-spacing:0.2px;text-indent:0.2px">T3</div><div class="av s" style="left:50.8px;top:210.1px;letter-spacing:0.2px;text-indent:0.2px">T3</div>
<div class="av b" style="left:8.5px;top:285.7px;letter-spacing:-1.6px;text-indent:-1.6px">JD</div><div class="av b" style="left:8.5px;top:383.6px;letter-spacing:0.3px;text-indent:0.3px">T3</div><div class="av b" style="left:8.5px;top:481.0px;letter-spacing:2.2px;text-indent:2.2px">AA</div>
<div class="av s" style="left:8.8px;top:598.8px;letter-spacing:1.2px;text-indent:1.2px">AA</div><div class="av s" style="left:50.8px;top:598.8px;letter-spacing:1.4px;text-indent:1.4px">H7</div>
<div class="av b" style="left:8.5px;top:674.8px;letter-spacing:3.2px;text-indent:3.2px">H7</div><div class="av b" style="left:8.5px;top:771.7px;letter-spacing:-1.6px;text-indent:-1.6px">JD</div><div class="av b" style="left:8.5px;top:869.4px;letter-spacing:-1.6px;text-indent:-1.6px">JD</div>
<div class="abs" style="left:0;top:964px;width:90px;height:22px;overflow:hidden"><div class="av s" style="left:8.8px;top:5px;letter-spacing:1.2px;text-indent:1.2px">AA</div><div class="av s" style="left:50.8px;top:5px;letter-spacing:1.4px;text-indent:1.4px">H7</div></div>
<div class="hr" style="left:8px;top:1002px"></div>
<svg class="ic" style="left:24px;top:1030px" width="54" height="56" viewBox="2808 1266 54 56" ><path d="M2838.6 1282.1A18.300 18.300 0 1 0 2849.5 1297.8" fill="none" stroke="#ef8650" stroke-width="2.800"/><path d="M2823.100 1297.100L2831.100 1305.400L2847.300 1287.300" fill="none" stroke="#ef8650" stroke-width="2.800"/><text x="2845.300" y="1286.800" font-family="Liberation Sans,Arial,sans-serif" font-weight="bold" font-size="23.500" style="-webkit-text-stroke:0" fill="#2a6099">2</text></svg>
<div class="hr" style="left:8px;top:1126px"></div>
<svg class="ic" style="left:24px;top:1158px" width="46" height="42" viewBox="2808 1394 46 42" ><g fill="none" stroke="#ef8650" stroke-width="3" stroke-linejoin="round"><path d="M2818.200 1399.500H2843.900A5 5 0 0 1 2848.900 1404.500V1419.100A5 5 0 0 1 2843.900 1424.100H2827.300L2818.300 1430.600V1424.100H2818.200A5 5 0 0 1 2813.200 1419.100V1404.500A5 5 0 0 1 2818.200 1399.500Z"/><path d="M2821.100 1409H2840.900M2821.100 1414.300H2840.900"/></g></svg>
<div class="hr" style="left:8px;top:1224px"></div>
<svg class="ic" style="left:24px;top:1251px" width="46" height="46" viewBox="2808 1487 46 46" ><g fill="none" stroke="#ef8650" stroke-width="3"><circle cx="2831" cy="1509.900" r="17.900"/><path d="M2824.800 1505.600A6.200 6.200 0 1 1 2834.300 1510.600C2831.800 1512.300 2830.800 1513.300 2830.800 1517.600" stroke-linecap="butt"/></g><circle cx="2830.800" cy="1522" r="2.100" fill="#ef8650"/></svg>
</aside>
</body></html>
